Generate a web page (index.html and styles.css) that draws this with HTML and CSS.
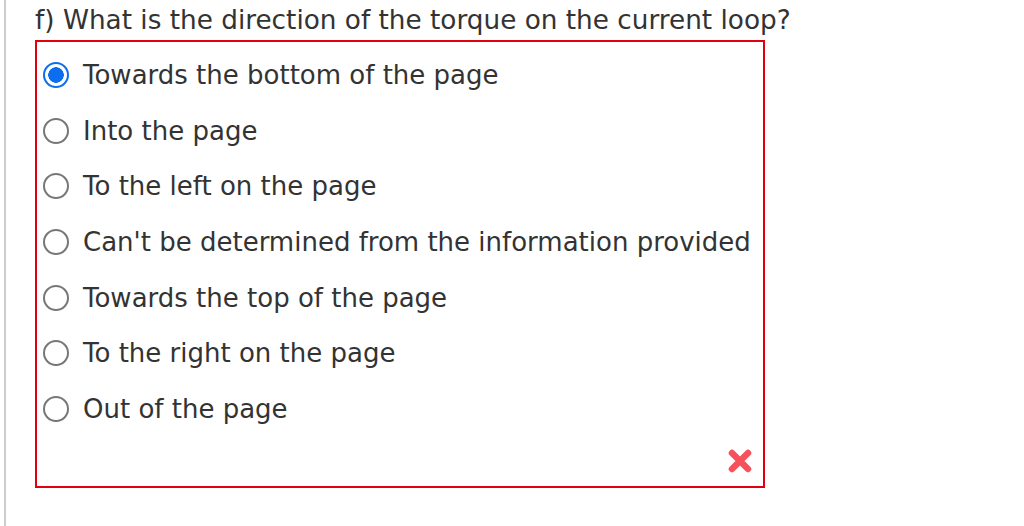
FILE: index.html
```html
<!DOCTYPE html>
<html>
<head>
<meta charset="utf-8">
<link rel="stylesheet" href="styles.css">
</head>
<body>
<div class="page">
  <div class="question">f) What is the direction of the torque on the current loop?</div>
  <div class="answers">
    <label class="opt"><span class="radio checked"></span><span class="txt">Towards the bottom of the page</span></label>
    <label class="opt"><span class="radio"></span><span class="txt">Into the page</span></label>
    <label class="opt"><span class="radio"></span><span class="txt">To the left on the page</span></label>
    <label class="opt"><span class="radio"></span><span class="txt">Can't be determined from the information provided</span></label>
    <label class="opt"><span class="radio"></span><span class="txt">Towards the top of the page</span></label>
    <label class="opt"><span class="radio"></span><span class="txt">To the right on the page</span></label>
    <label class="opt"><span class="radio"></span><span class="txt">Out of the page</span></label>
    <div class="mark">
      <svg width="28" height="28" viewBox="0 0 28 28"><path d="M6 6 L22 22 M22 6 L6 22" stroke="#f5525b" stroke-width="6.5" stroke-linecap="round"/></svg>
    </div>
  </div>
</div>
</body>
</html>
```
FILE: styles.css
```css
html, body { margin: 0; padding: 0; background: #fff; }
body { font-family: "DejaVu Sans", Verdana, sans-serif; color: #333; }
.page {
  margin-left: 4px;
  border-left: 2px solid #ccc;
  padding-left: 29px;
  height: 526px;
  box-sizing: border-box;
}
.question {
  font-size: 26.3px;
  line-height: 40px;
  color: #333;
}
.answers {
  width: 730px;
  height: 448px;
  box-sizing: border-box;
  border: 2px solid #e1000f;
  padding: 5px 0 0 6px;
  display: flex;
  flex-direction: column;
}
.opt {
  display: flex;
  align-items: center;
  height: 55.7px;
  font-size: 26px;
  color: #333;
}
.radio {
  width: 26px;
  height: 26px;
  border: 2px solid #777;
  border-radius: 50%;
  box-sizing: border-box;
  margin-right: 14px;
  flex: none;
}
.radio.checked {
  border: 2px solid #0b6df0;
  background: radial-gradient(circle, #0b6df0 0 7.5px, #fff 8px);
}
.mark {
  margin-top: auto;
  align-self: flex-end;
  margin-right: 9px;
  margin-bottom: 11px;
  height: 28px;
}
```
